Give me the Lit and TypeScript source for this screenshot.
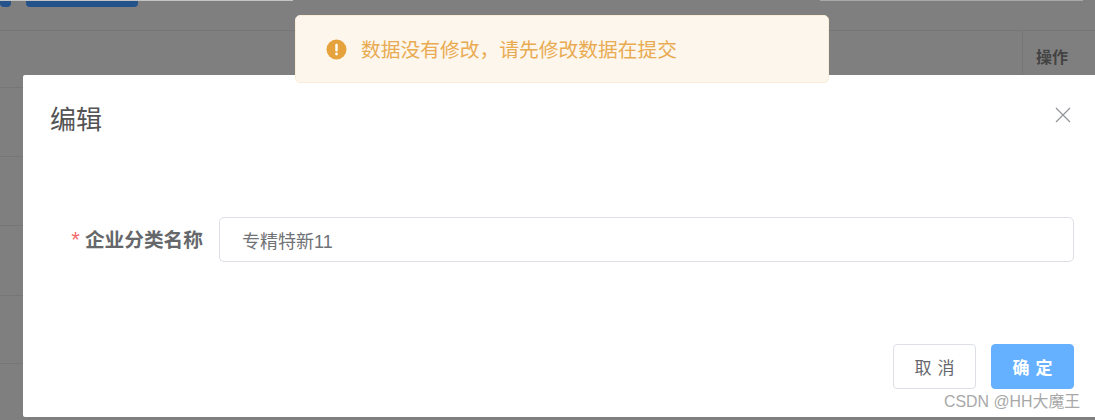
import { LitElement, html, css } from "lit";
import { customElement } from "lit/decorators.js";

const rows = [57, 69, 69, 70, 68];

@customElement("app-root")
export class AppRoot extends LitElement {
  static styles = css`
    :host {
      display: block;
      width: 1095px;
      height: 420px;
      position: relative;
      overflow: hidden;
      background: #7f7f7f;
      font-family: "Liberation Sans", "Noto Sans CJK SC", sans-serif;
    }
    .page { display: flex; flex-direction: column; height: 420px; }
    .topline { height: 1px; background: linear-gradient(90deg, #c4c4c4 0, #c4c4c4 293px, #7f7f7f 293px, #7f7f7f 820px, #a8a8a8 820px, #a8a8a8 1083px, #7f7f7f 1083px); flex: none; }
    .toolbar { height: 30px; box-sizing: border-box; display: flex; gap: 15px; flex: none; align-items: flex-start; border-bottom: 1px solid #767676; }
    .tb { height: 6px; background: #23538a; border-radius: 0 0 4px 4px; }
    .tb.a { width: 11px; }
    .tb.b { width: 112px; }
    .row { border-bottom: 1px solid #767676; box-sizing: border-box; flex: none; display: flex; justify-content: flex-end; }
    .cell { width: 73px; box-sizing: border-box; border-left: 1px solid #767676; padding: 16px 0 0 13px; font-size: 16px; font-weight: 700; color: #434343; line-height: 22px; }

    .dialog {
      position: absolute;
      left: 23px; top: 75px; right: 0; height: 342px;
      background: #fff;
      border-radius: 2px 0 0 2px;
      box-sizing: border-box;
      display: flex;
      flex-direction: column;
      padding: 0 21px 28px 28px;
    }
    .head { display: flex; justify-content: space-between; align-items: flex-start; padding-top: 27px; height: 142px; box-sizing: border-box; flex: none; }
    .title { font-size: 26px; line-height: 36px; color: #545454; margin-left: -1px; }
    .close { width: 16px; height: 16px; margin: 5px 3px 0 0; }
    .field { display: flex; align-items: center; height: 45px; flex: none; }
    .label { width: 168px; box-sizing: border-box; padding-right: 16px; text-align: right; font-size: 19.7px; font-weight: 700; color: #65676b; white-space: nowrap; position: relative; top: -1px; }
    .star { color: #f56c6c; font-weight: 400; font-size: 22px; margin-right: 5px; }
    .input { flex: 1; height: 45px; box-sizing: border-box; border: 1px solid #dcdfe6; border-radius: 5px; padding: 0 22px; display: flex; align-items: center; font-size: 18px; color: #707276; }
    .foot { margin-top: auto; display: flex; justify-content: flex-end; gap: 15px; }
    .btn { width: 83px; height: 45px; box-sizing: border-box; border-radius: 4px; display: flex; align-items: center; justify-content: center; font-size: 17px; letter-spacing: 6px; text-indent: 6px; border: 1px solid #dcdfe6; color: #65676b; background: #fff; }
    .btn.primary { background: #66b1ff; border-color: #66b1ff; color: #fff; font-weight: 700; }

    .msg {
      position: absolute;
      left: 295px; top: 15px; width: 534px; height: 68px;
      box-sizing: border-box;
      background: #fdf6ec;
      border: 1px solid #faecd8;
      border-radius: 5px;
      display: flex; align-items: center;
      padding-left: 30px; gap: 14px;
      color: #e9ab52;
      font-size: 19.75px;
    }
    .msg svg { width: 21px; height: 21px; flex: none; }
    .msg span { position: relative; top: -1px; }
    .mark { position: absolute; left: 944px; top: 391px; font-size: 15.9px; line-height: 22px; color: #a8a8a8; white-space: nowrap; }
  `;

  render() {
    return html`
      <div class="page">
        <div class="topline"></div>
        <div class="toolbar"><div class="tb a"></div><div class="tb b"></div></div>
        ${rows.map((h, i) => html`
          <div class="row" style="height:${h}px">
            ${i === 0 ? html`<div class="cell">操作</div>` : ""}
          </div>`)}
      </div>
      <div class="dialog">
        <div class="head">
          <div class="title">编辑</div>
          <svg class="close" viewBox="0 0 16 16" fill="none" stroke="#909399" stroke-width="1.2">
            <path d="M1 1 L15 15 M15 1 L1 15"></path>
          </svg>
        </div>
        <div class="field">
          <div class="label"><span class="star">*</span>企业分类名称</div>
          <div class="input">专精特新11</div>
        </div>
        <div class="foot">
          <div class="btn">取消</div>
          <div class="btn primary">确定</div>
        </div>
      </div>
      <div class="msg">
        <svg viewBox="0 0 21 21">
          <circle cx="10.5" cy="10.5" r="10" fill="#e6a23c"></circle>
          <rect x="9.3" y="4.8" width="2.4" height="7.8" rx="1" fill="#fff"></rect>
          <circle cx="10.5" cy="15" r="1.4" fill="#fff"></circle>
        </svg>
        <span>数据没有修改，请先修改数据在提交</span>
      </div>
      <div class="mark">CSDN @HH大魔王</div>
    `;
  }
}
